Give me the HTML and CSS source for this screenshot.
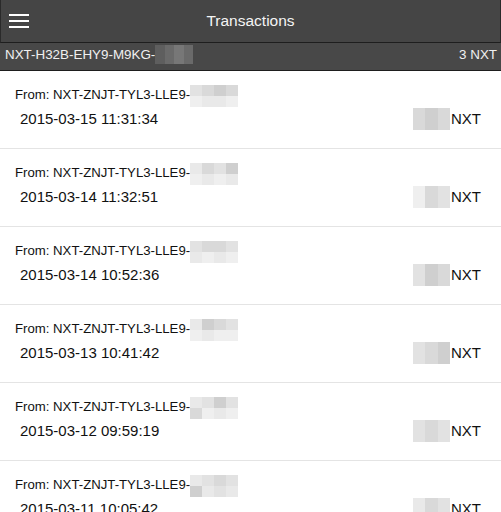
FILE: index.html
```html
<!DOCTYPE html>
<html lang="en">
<head>
    <meta charset="UTF-8">
    <meta name="viewport" content="width=device-width, initial-scale=1.0">
    <title>Transactions</title>
    <link rel="stylesheet" href="styles.css">
</head>
<body>
    <div class="page">
        <div class="header">
            <button class="menu-btn" aria-label="Menu">
                <svg width="20" height="14" viewBox="0 0 20 14">
                    <rect x="0" y="0" width="20" height="2" fill="#fff"/>
                    <rect x="0" y="6" width="20" height="2" fill="#fff"/>
                    <rect x="0" y="12" width="20" height="2" fill="#fff"/>
                </svg>
            </button>
            <h1 class="title">Transactions</h1>
            <span></span>
        </div>

        <div class="account-bar">
            <span class="account">NXT-H32B-EHY9-M9KG-<span class="mask mask-short"><i class="g3"></i><i class="g2"></i><i class="g4"></i><i class="g2"></i></span></span>
            <span class="balance">3 NXT</span>
        </div>

        <ul class="tx-list">
            <li class="tx">
                <div class="tx-from">From: NXT-ZNJT-TYL3-LLE9-<span class="mask"><i class="g3"></i><i class="g2"></i><i class="g1"></i><i class="g2"></i><i class="g5"></i><i class="g4"></i><i class="g4"></i><i class="g5"></i></span></div>
                <div class="tx-line">
                    <span class="tx-date">2015-03-15 11:31:34</span>
                    <span class="tx-amount"><span class="mask-amt"><i class="g2"></i><i class="g1"></i><i class="g2"></i></span>NXT</span>
                </div>
            </li>
            <li class="tx">
                <div class="tx-from">From: NXT-ZNJT-TYL3-LLE9-<span class="mask"><i class="g4"></i><i class="g2"></i><i class="g3"></i><i class="g1"></i><i class="g5"></i><i class="g4"></i><i class="g5"></i><i class="g4"></i></span></div>
                <div class="tx-line">
                    <span class="tx-date">2015-03-14 11:32:51</span>
                    <span class="tx-amount"><span class="mask-amt"><i class="g5"></i><i class="g2"></i><i class="g3"></i></span>NXT</span>
                </div>
            </li>
            <li class="tx">
                <div class="tx-from">From: NXT-ZNJT-TYL3-LLE9-<span class="mask"><i class="g3"></i><i class="g2"></i><i class="g2"></i><i class="g3"></i><i class="g4"></i><i class="g5"></i><i class="g4"></i><i class="g5"></i></span></div>
                <div class="tx-line">
                    <span class="tx-date">2015-03-14 10:52:36</span>
                    <span class="tx-amount"><span class="mask-amt"><i class="g3"></i><i class="g1"></i><i class="g2"></i></span>NXT</span>
                </div>
            </li>
            <li class="tx">
                <div class="tx-from">From: NXT-ZNJT-TYL3-LLE9-<span class="mask"><i class="g4"></i><i class="g1"></i><i class="g2"></i><i class="g3"></i><i class="g5"></i><i class="g4"></i><i class="g5"></i><i class="g5"></i></span></div>
                <div class="tx-line">
                    <span class="tx-date">2015-03-13 10:41:42</span>
                    <span class="tx-amount"><span class="mask-amt"><i class="g3"></i><i class="g2"></i><i class="g1"></i></span>NXT</span>
                </div>
            </li>
            <li class="tx">
                <div class="tx-from">From: NXT-ZNJT-TYL3-LLE9-<span class="mask"><i class="g4"></i><i class="g3"></i><i class="g1"></i><i class="g3"></i><i class="g2"></i><i class="g5"></i><i class="g4"></i><i class="g5"></i></span></div>
                <div class="tx-line">
                    <span class="tx-date">2015-03-12 09:59:19</span>
                    <span class="tx-amount"><span class="mask-amt"><i class="g3"></i><i class="g2"></i><i class="g3"></i></span>NXT</span>
                </div>
            </li>
            <li class="tx">
                <div class="tx-from">From: NXT-ZNJT-TYL3-LLE9-<span class="mask"><i class="g4"></i><i class="g3"></i><i class="g2"></i><i class="g3"></i><i class="g1"></i><i class="g4"></i><i class="g3"></i><i class="g4"></i></span></div>
                <div class="tx-line">
                    <span class="tx-date">2015-03-11 10:05:42</span>
                    <span class="tx-amount"><span class="mask-amt"><i class="g4"></i><i class="g2"></i><i class="g3"></i></span>NXT</span>
                </div>
            </li>
        </ul>
    </div>
</body>
</html>
```

FILE: styles.css
```css
/* Transactions list */
body {
    margin: 0;
    padding: 0;
    background: #fff;
    font-family: "Liberation Sans", Arial, sans-serif;
    color: #111;
}
.page {
    width: 501px;
    height: 512px;
    overflow: hidden;
}
.header {
    display: grid;
    grid-template-columns: 1fr auto 1fr;
    align-items: center;
    height: 42px;
    background: #454545;
    border-left: 1px solid #2a2a2a;
    border-right: 1px solid #2a2a2a;
    border-bottom: 1px solid #1e1e1e;
}
.menu-btn {
    justify-self: start;
    display: flex;
    margin: 0 0 0 8px;
    padding: 0;
    background: none;
    border: none;
    cursor: pointer;
}
.title {
    margin: 0;
    font-size: 15.5px;
    font-weight: normal;
    line-height: 42px;
    color: #f4f4f4;
}
.account-bar {
    display: flex;
    justify-content: space-between;
    height: 23px;
    padding: 0 4px 4px 5px;
    line-height: 23px;
    font-size: 13.4px;
    color: #f0f0f0;
    background: #484848;
    border-bottom: 1px solid #1e1e1e;
}
.tx-list {
    list-style: none;
    margin: 0;
    padding: 0;
}
.tx {
    height: 78px;
    padding: 15px 20px 0 15px;
    box-sizing: border-box;
    border-bottom: 1px solid #e4e4e4;
}
.tx-from {
    font-size: 13.2px;
    line-height: 18px;
    height: 18px;
    margin-bottom: 4px;
    white-space: nowrap;
}
.tx-line {
    display: flex;
    justify-content: space-between;
    align-items: center;
    line-height: 22px;
}
.tx-date {
    padding-left: 5px;
    font-size: 15px;
}
.tx-amount {
    display: flex;
    align-items: center;
    font-size: 15px;
}

/* pixelated masks over hidden values */
.mask {
    display: inline-grid;
    grid-template-columns: repeat(4, 12px);
    grid-template-rows: 11px 11px;
    vertical-align: top;
    margin-top: -1px;
    margin-bottom: -4px;
}
.mask-short {
    grid-template-columns: repeat(4, 9.5px);
    grid-template-rows: 19px;
    margin-top: 2px;
    margin-bottom: -2px;
}
.mask-amt {
    display: grid;
    grid-template-columns: repeat(3, 12.5px);
    height: 22px;
    margin-right: 1px;
}
.mask i, .mask-amt i {
    display: block;
}
.g1 { background: #cfcfcf; }
.g2 { background: #d9d9d9; }
.g3 { background: #e2e2e2; }
.g4 { background: #e9e9e9; }
.g5 { background: #efefef; }
.account-bar .g2 { background: #6a6a6a; }
.account-bar .g3 { background: #5e5e5e; }
.account-bar .g4 { background: #777; }
```
